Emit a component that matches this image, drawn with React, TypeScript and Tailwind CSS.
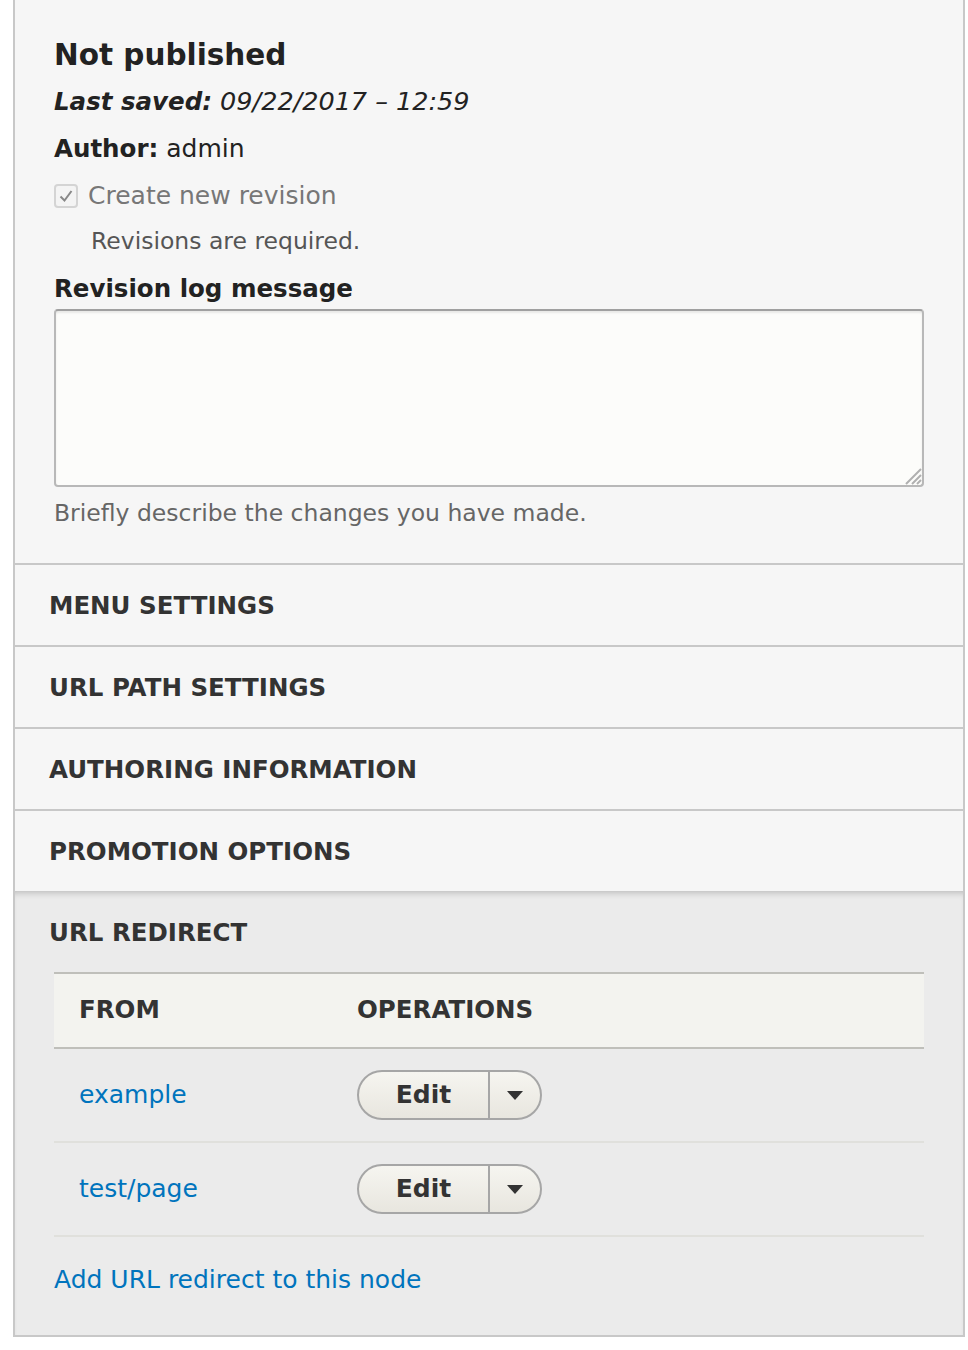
const font = { fontFamily: '"DejaVu Sans", "Noto Sans", sans-serif' }

const sections = ['MENU SETTINGS', 'URL PATH SETTINGS', 'AUTHORING INFORMATION', 'PROMOTION OPTIONS']

const redirects = ['example', 'test/page']

function EditButton() {
  return (
    <div className="flex h-[50px] w-[185px] items-stretch rounded-full border-2 border-[#a6a6a6] bg-gradient-to-b from-[#f6f5f0] to-[#e8e6df]">
      <span className="flex w-[129px] items-center justify-center text-[25px] font-bold text-[#333]">Edit</span>
      <span className="w-[2px] bg-[#a6a6a6]" />
      <span className="flex flex-1 items-center justify-center">
        <svg width="16" height="9" viewBox="0 0 16 9">
          <path d="M0 0h16L8 9z" fill="#333" />
        </svg>
      </span>
    </div>
  )
}

export default function App() {
  return (
    <div className="min-h-screen bg-white text-[#333]" style={font}>
      <div className="ml-[13px] w-[952px] border-x-2 border-b-2 border-[#c8c8c8]">
        {/* meta */}
        <div className="bg-[#f6f6f6] pt-[35px] pr-[39px] pb-[34px] pl-[39px]">
          <h3 className="text-[29.5px] font-bold leading-[40px] text-[#222]">Not published</h3>
          <p className="mt-[9px] text-[25.5px] italic leading-[34px] text-[#222]">
            <b className="text-[24.5px]">Last saved:</b> 09/22/2017 – 12:59
          </p>
          <p className="mt-[13px] text-[25px] leading-[34px] text-[#222]">
            <b className="text-[24.5px]">Author:</b> admin
          </p>
          <label className="mt-[13px] flex items-center gap-[10px] text-[25px] leading-[34px] text-[#777]">
            <span className="flex h-[24px] w-[24px] items-center justify-center rounded-[4px] border-2 border-[#d4d4d4] bg-[#f4f4f4]">
              <svg width="16" height="14" viewBox="0 0 16 14">
                <path d="M2.5 7.5l4 4L13.5 2" stroke="#888" strokeWidth="2" fill="none" />
              </svg>
            </span>
            Create new revision
          </label>
          <p className="mt-[12px] pl-[37px] text-[23.5px] leading-[32px] text-[#555]">Revisions are required.</p>
          <p className="mt-[15px] text-[24.5px] font-bold leading-[34px] text-[#222]">Revision log message</p>
          <div className="relative mt-[3px] h-[178px] rounded-[4px] border-2 border-[#b8b8b8] border-t-[#a0a0a0] bg-[#fcfcfa] shadow-[inset_0_2px_2px_rgba(0,0,0,0.08)]">
            <svg className="absolute right-0 bottom-0" width="20" height="20" viewBox="0 0 20 20">
              <path d="M19 4L4 19M19 10L10 19M19 15L15 19" stroke="#b0b0b0" strokeWidth="2" />
            </svg>
          </div>
          <p className="mt-[10px] text-[23.5px] leading-[32px] text-[#666]">Briefly describe the changes you have made.</p>
        </div>

        {/* collapsed details */}
        {sections.map((s) => (
          <div
            key={s}
            className="flex h-[82px] items-center border-t-2 border-[#c8c8c8] bg-[#f6f6f6] px-[34px] pt-[2px] text-[24.5px] font-bold text-[#333]"
          >
            {s}
          </div>
        ))}

        {/* open details */}
        <div className="bg-[#ebebeb] shadow-[inset_0_6px_6px_-4px_rgba(0,0,0,0.2)]">
          <div className="flex h-[81px] items-center px-[34px] pt-[4px] text-[24.5px] font-bold text-[#333]">URL REDIRECT</div>
          <div className="px-[39px] pb-[38px]">
            <div className="border-y-2 border-[#bfbfba] bg-[#f3f3ef]">
              <div className="flex h-[73px] items-center text-[24.5px] font-bold text-[#333]">
                <span className="w-[303px] pl-[25px]">FROM</span>
                <span>OPERATIONS</span>
              </div>
            </div>
            {redirects.map((r) => (
              <div key={r} className="flex h-[94px] items-center border-b-2 border-[#e0e0dc]">
                <a className="w-[303px] pl-[25px] text-[25px] text-[#0074bd]">{r}</a>
                <EditButton />
              </div>
            ))}
            <a className="mt-[26px] block text-[25px] leading-[34px] text-[#0074bd]">Add URL redirect to this node</a>
          </div>
        </div>
      </div>
    </div>
  )
}
